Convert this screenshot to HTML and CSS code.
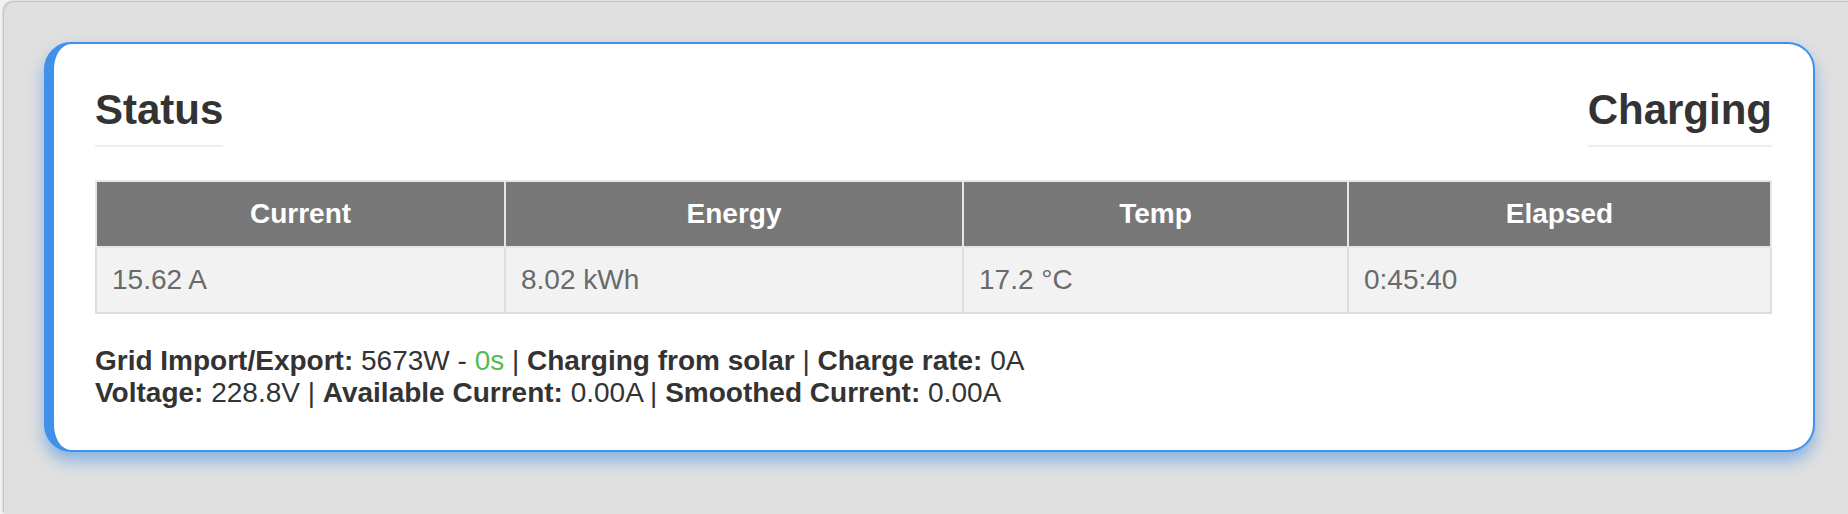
FILE: index.html
```html
<!DOCTYPE html>
<html lang="en">
<head>
<meta charset="utf-8">
<title>Status</title>
<link rel="stylesheet" href="styles.css">
</head>
<body>
<div class="page">
  <section class="card">
    <div class="card-head">
      <h2 class="title">Status</h2>
      <h2 class="title">Charging</h2>
    </div>
    <table class="stats">
      <thead>
        <tr>
          <th class="c1">Current</th>
          <th class="c2">Energy</th>
          <th class="c3">Temp</th>
          <th class="c4">Elapsed</th>
        </tr>
      </thead>
      <tbody>
        <tr>
          <td>15.62 A</td>
          <td>8.02 kWh</td>
          <td>17.2 °C</td>
          <td>0:45:40</td>
        </tr>
      </tbody>
    </table>
    <div class="info">
      <div class="line"><b>Grid Import/Export:</b> 5673W - <span class="ok">0s</span> | <b>Charging from solar</b> | <b>Charge rate:</b> 0A</div>
      <div class="line"><b>Voltage:</b> 228.8V | <b>Available Current:</b> 0.00A | <b>Smoothed Current:</b> 0.00A</div>
    </div>
  </section>
</div>
</body>
</html>
```

FILE: styles.css
```css
html, body {
  margin: 0;
  padding: 0;
  height: 100%;
  overflow: hidden;
  background: #f2f2f2;
  font-family: "Liberation Sans", Arial, Helvetica, sans-serif;
  color: #333;
}

.page {
  box-sizing: border-box;
  height: calc(100vh - 2px);
  margin: 2px -20px 0 4px;
  padding: 40px 53px 0 40px;
  background: #e0e0e0;
  border-radius: 10px 0 0 0;
  box-shadow: -1px -1px 2px rgba(0, 0, 0, 0.25);
}

.card {
  background: #fff;
  border: 2px solid #4190ec;
  border-left-width: 10px;
  border-radius: 27px;
  padding: 41px 41px 41px 41px;
  box-shadow: 0 9px 16px rgba(66, 140, 230, 0.55);
}

.card-head {
  display: flex;
  justify-content: space-between;
  align-items: flex-start;
}

.title {
  margin: 0;
  font-size: 42px;
  line-height: 50px;
  font-weight: bold;
  color: #333;
  padding-bottom: 10px;
  border-bottom: 2px solid #eeeeee;
}

.stats {
  width: 100%;
  margin-top: 33px;
  border-collapse: collapse;
  table-layout: fixed;
  font-size: 28px;
  line-height: 32px;
}

.stats th {
  background: #777777;
  color: #fff;
  font-weight: bold;
  text-align: center;
  padding: 16px 15px;
  border: 2px solid #e6e6e6;
}

.stats td {
  background: #f2f2f2;
  color: #6a6a6a;
  text-align: left;
  padding: 16px 15px;
  border: 2px solid #dddddd;
}

.stats .c1 { width: 377px; }
.stats .c2 { width: 426px; }
.stats .c3 { width: 353px; }

.info {
  margin-top: 31px;
  font-size: 28px;
  line-height: 32px;
  color: #333;
}

.info b {
  font-weight: bold;
}

.ok {
  color: #55bb55;
}
```
